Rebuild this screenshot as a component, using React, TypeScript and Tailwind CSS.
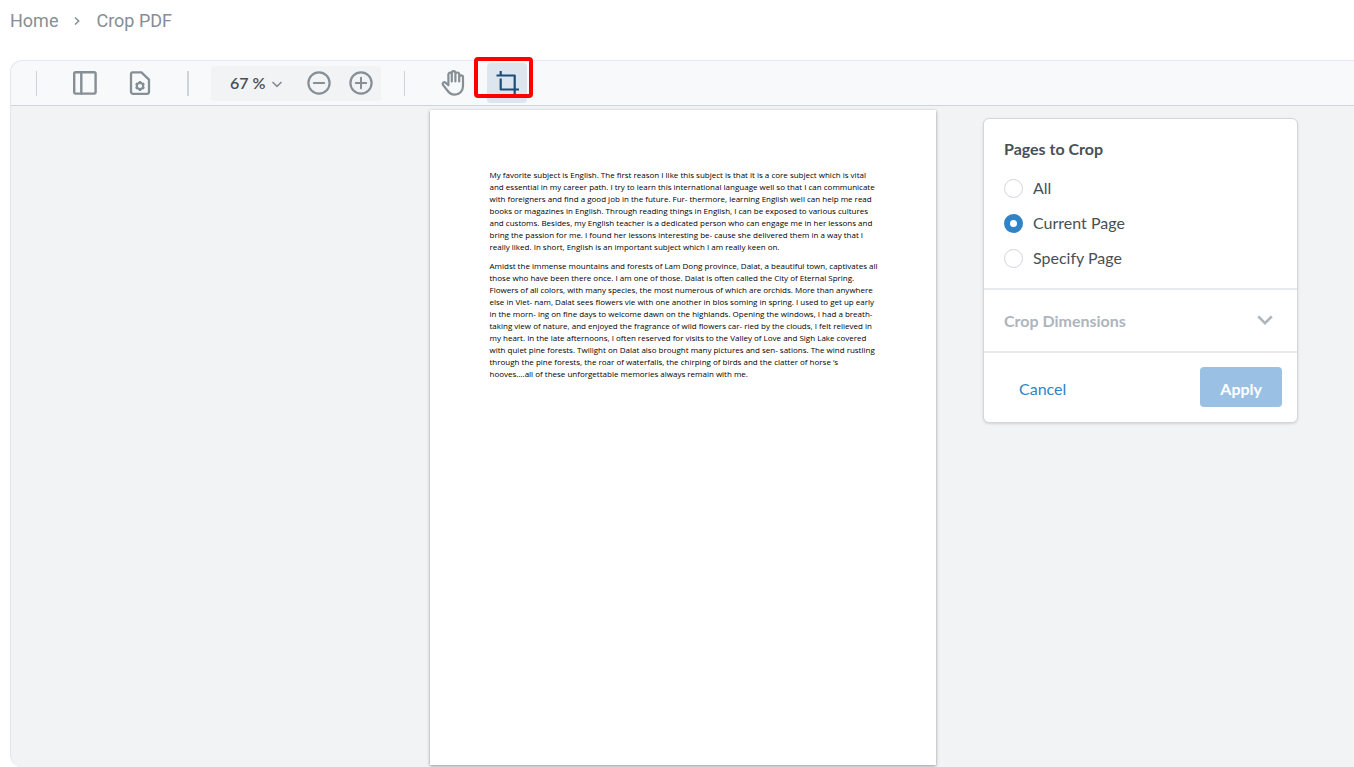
import { useState } from 'react'
import type { FC, ReactNode } from 'react'

type PageScope = 'all' | 'current' | 'specify'

const scopes: { value: PageScope; label: string }[] = [
  { value: 'all', label: 'All' },
  { value: 'current', label: 'Current Page' },
  { value: 'specify', label: 'Specify Page' }
]

const paragraphs: string[][] = [
  [
    'My favorite subject is English. The first reason I like this subject is that it is a core subject which is vital',
    'and essential in my career path. I try to learn this international language well so that I can communicate',
    'with foreigners and find a good job in the future. Fur- thermore, learning English well can help me read',
    'books or magazines in English. Through reading things in English, I can be exposed to various cultures',
    'and customs. Besides, my English teacher is a dedicated person who can engage me in her lessons and',
    'bring the passion for me. I found her lessons interesting be- cause she delivered them in a way that I',
    'really liked. In short, English is an important subject which I am really keen on.'
  ],
  [
    'Amidst the immense mountains and forests of Lam Dong province, Dalat, a beautiful town, captivates all',
    'those who have been there once. I am one of those. Dalat is often called the City of Eternal Spring.',
    'Flowers of all colors, with many species, the most numerous of which are orchids. More than anywhere',
    'else in Viet- nam, Dalat sees flowers vie with one another in blos soming in spring. I used to get up early',
    'in the morn- ing on fine days to welcome dawn on the highlands. Opening the windows, I had a breath-',
    'taking view of nature, and enjoyed the fragrance of wild flowers car- ried by the clouds, I felt relieved in',
    'my heart. In the late afternoons, I often reserved for visits to the Valley of Love and Sigh Lake covered',
    'with quiet pine forests. Twilight on Dalat also brought many pictures and sen- sations. The wind rustling',
    'through the pine forests, the roar of waterfalls, the chirping of birds and the clatter of horse ‘s',
    'hooves….all of these unforgettable memories always remain with me.'
  ]
]

interface ToolButtonProps {
  label: string
  active?: boolean
  children: ReactNode
}

const ToolButton: FC<ToolButtonProps> = ({ label, active, children }) => (
  <button
    type="button"
    aria-label={label}
    className={`flex h-10 w-10 shrink-0 items-center justify-center rounded ${
      active ? 'bg-[#dde5ee] text-[#1b4f7a]' : 'text-[#868e96]'
    }`}
  >
    <svg
      className="h-6 w-6 overflow-visible"
      viewBox="0 0 24 24"
      fill="none"
      stroke="currentColor"
      strokeWidth={2}
      strokeLinecap="round"
      strokeLinejoin="round"
    >
      {children}
    </svg>
  </button>
)

const Toolbar: FC = () => {
  const [zoom, setZoom] = useState('67')

  return (
    <div className="flex h-[45px] items-center rounded-tl-xl border-b border-[#cfd4da] bg-[#f8f9fa] pl-[25px]">
      <div className="h-[25px] w-px bg-[#ced4da]" />
      <div className="ml-7 flex gap-[15px]">
        <ToolButton label="Toggle panel">
          <rect x="1.2" y="1.2" width="21.4" height="21.4" rx="1.5" strokeWidth={2.4} />
          <path d="M8.3 1.5v21" strokeWidth={2.4} />
        </ToolButton>
        <ToolButton label="View controls">
          <path d="M4.4 1.3h9L21 8.6v12.2a2 2 0 0 1-2 2H5a2 2 0 0 1-2-2V2.9a1.6 1.6 0 0 1 1.4-1.6z" strokeWidth={2.3} />
          <circle cx="12" cy="15" r="3.2" strokeWidth={2.2} />
          <path
            d="M12 10v1.6M12 18.4V20M7.7 12.5l1.4.8M14.9 16.7l1.4.8M7.7 17.5l1.4-.8M14.9 13.3l1.4-.8"
            strokeWidth={2.4}
            strokeLinecap="butt"
          />
        </ToolButton>
      </div>
      <div className="ml-[27px] h-[25px] w-0.5 bg-[#ced4da]" />
      <div className="ml-[22px] flex h-[35px] items-center rounded bg-[#f1f3f5]">
        <div className="relative h-full">
          <select
            aria-label="Zoom"
            value={zoom}
            onChange={(e) => setZoom(e.target.value)}
            className="h-full w-22 appearance-none bg-transparent pl-[19px] text-base font-semibold text-[#495057] outline-none"
          >
            <option value="50">50 %</option>
            <option value="67">67 %</option>
            <option value="100">100 %</option>
          </select>
          <svg
            className="pointer-events-none absolute top-3 right-4 h-3 w-3 text-[#868e96]"
            viewBox="0 0 12 12"
            fill="none"
            stroke="currentColor"
            strokeWidth={1.7}
          >
            <path d="M1.5 4L6 8.3 10.5 4" />
          </svg>
        </div>
        <div className="flex gap-0.5">
          <ToolButton label="Zoom out">
            <circle cx="12" cy="12" r="10.6" strokeWidth={2.2} />
            <path d="M6.8 12h10.4" />
          </ToolButton>
          <ToolButton label="Zoom in">
            <circle cx="12" cy="12" r="10.6" strokeWidth={2.2} />
            <path d="M6.8 12h10.4M12 6.8v10.4" />
          </ToolButton>
        </div>
      </div>
      <div className="ml-[23px] h-[25px] w-px bg-[#ced4da]" />
      <div className="ml-7 flex gap-[14px]">
        <ToolButton label="Pan">
          <path
            d="M7.4 13.6V3.4a1.7 1.7 0 0 1 3.4 0M10.8 10.5V1.9a1.8 1.8 0 0 1 3.6 0V3M14.4 10.5V3.4a1.9 1.9 0 0 1 3.8 0v7.1M18.2 6.3a1.9 1.9 0 0 1 3.8 0V15c0 5-3.6 8.6-8.4 8.6-3.5 0-5.4-1.5-7.2-4.1L2 13.9c-1.1-1.8.9-3.5 2.6-2.2l2.8 2.6"
            strokeWidth={2.2}
          />
        </ToolButton>
        <div className="relative">
          <ToolButton label="Crop" active>
            <path d="M1.5 4.5h18.2V24M5.7 0v4.5M5.7 7.5v11H24" strokeWidth={2.2} strokeLinecap="butt" />
          </ToolButton>
          <div className="pointer-events-none absolute -top-1.5 -right-1.5 h-[41px] w-[59px] rounded-sm border-4 border-[#fe0000]" />
        </div>
      </div>
    </div>
  )
}

const CropPanel: FC = () => {
  const [scope, setScope] = useState<PageScope>('current')

  return (
    <form
      className="w-[315px] divide-y-2 divide-[#e6eaed] rounded-md border border-[#d3d7dc] bg-white text-[#485056] shadow"
      onSubmit={(e) => e.preventDefault()}
    >
      <fieldset className="px-5 pt-5 pb-5">
        <legend className="float-left w-full text-base leading-5 font-bold">Pages to Crop</legend>
        <div className="clear-both flex flex-col gap-[15px] pt-[19px]">
          {scopes.map(({ value, label }) => (
            <label key={value} className="flex h-5 items-center gap-2.5 text-base leading-5">
              <input
                type="radio"
                name="scope"
                value={value}
                checked={scope === value}
                onChange={() => setScope(value)}
                className="h-[19px] w-[19px] shrink-0 appearance-none rounded-full border border-[#d3d6dc] bg-white checked:border-6 checked:border-[#3183c8]"
              />
              {label}
            </label>
          ))}
        </div>
      </fieldset>
      <button
        type="button"
        className="flex h-[63px] w-full items-center justify-between pr-6 pl-5 text-base font-bold text-[#adb5bd]"
      >
        Crop Dimensions
        <svg className="h-4 w-4" viewBox="0 0 16 16" fill="none" stroke="currentColor" strokeWidth={2.6}>
          <path d="M1.2 3.4L8 10.2l6.8-6.8" />
        </svg>
      </button>
      <div className="flex items-center justify-between pt-[14px] pr-[15px] pb-[15px] pl-5">
        <button type="button" className="h-10 px-[15px] pt-1 text-base text-[#3183c8]">
          Cancel
        </button>
        <button type="submit" className="h-10 rounded bg-[#9ac1e4] px-5 pt-1 text-base font-bold text-white">
          Apply
        </button>
      </div>
    </form>
  )
}

export default function App() {
  return (
    <div className="flex min-h-screen flex-col bg-white pl-2.5 font-['Lato',sans-serif]">
      <nav className="flex items-center gap-4 pt-[7px] pb-[25px] font-['Roboto',sans-serif] text-lg leading-7 text-[#868e96]">
        <a href="#home">Home</a>
        <svg className="h-2 w-1.5" viewBox="0 0 6 8" fill="none" stroke="currentColor" strokeWidth={1.5}>
          <path d="M1 .5L4.7 4 1 7.5" />
        </svg>
        <a href="#crop">Crop PDF</a>
      </nav>
      <main className="flex flex-1 flex-col rounded-l-xl border border-r-0 border-b-0 border-[#e1e8f1] bg-[#f1f3f5]">
        <Toolbar />
        <div className="grid flex-1 grid-cols-[1fr_auto_1fr] items-start">
          <article className="col-start-2 mt-1 aspect-[506/655] w-[506px] bg-white px-[60px] pt-[59px] font-['Open_Sans',sans-serif] text-[8px] leading-3 text-black shadow-[0_1px_3px_rgba(0,0,0,0.4)]">
            {paragraphs.map((lines) => (
              <p key={lines[0]} className="mb-[7px]">
                {lines.map((line) => (
                  <span key={line} className="block whitespace-nowrap">
                    {line}
                  </span>
                ))}
              </p>
            ))}
          </article>
          <aside className="flex justify-end pt-3 pr-14">
            <CropPanel />
          </aside>
        </div>
      </main>
    </div>
  )
}
